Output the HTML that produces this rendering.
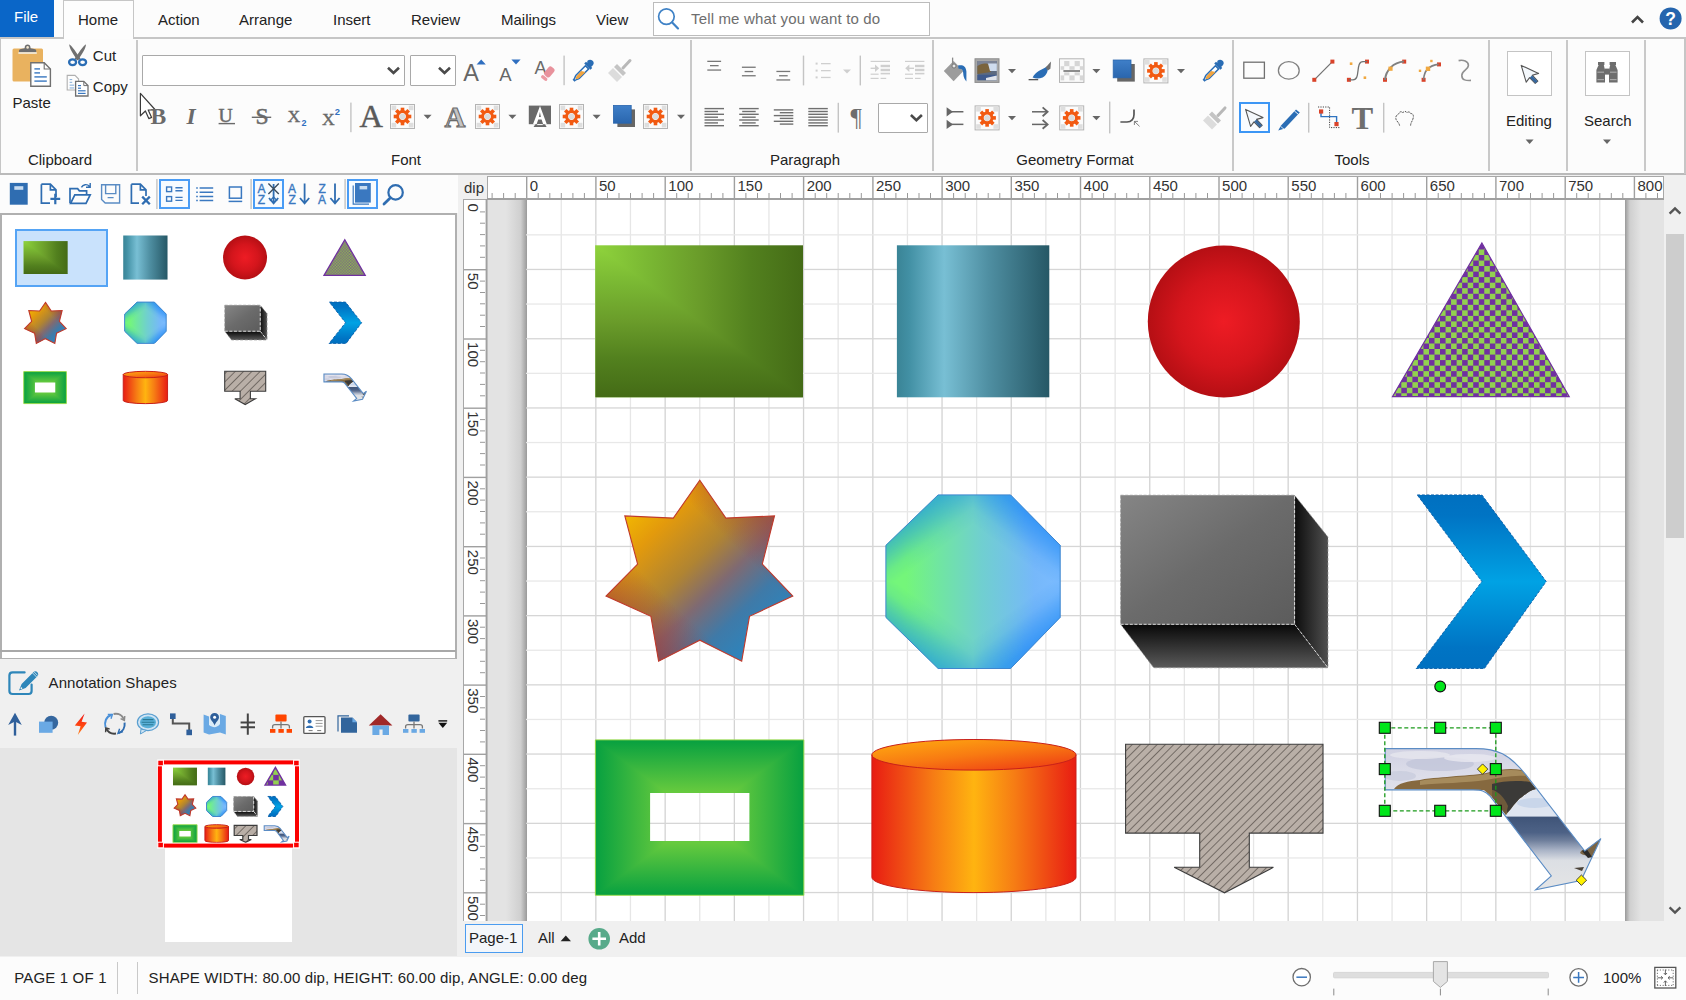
<!DOCTYPE html>
<html><head><meta charset="utf-8"><title>Diagram</title>
<style>
html,body{margin:0;padding:0}
body{width:1686px;height:1000px;overflow:hidden;position:relative;background:#f0f0f0;font-family:"Liberation Sans",sans-serif;font-size:15px;color:#222}
.abs{position:absolute}
svg{position:absolute;overflow:visible}
svg text{font-family:"Liberation Sans",sans-serif}
.t{position:absolute;white-space:nowrap;line-height:18px}
.sep{position:absolute;width:2px;background:#c9c9c9}
.gl{position:absolute;top:151px;height:18px;line-height:18px;text-align:center;white-space:nowrap}
.combo{position:absolute;background:#fff;border:1.5px solid #a9a9a9;border-radius:1px;box-sizing:border-box}
.selbox{position:absolute;border:1px solid #4a9cf0;background:#e5f1fd;box-sizing:border-box}
.ser{font-family:"Liberation Serif",serif}
</style></head>
<body>
<!-- ===== tab strip ===== -->
<div class="abs" style="left:0;top:0;width:1686px;height:38px;background:#fcfcfc"></div>
<div class="abs" style="left:0;top:37px;width:1686px;height:2px;background:#c6c6c6"></div>
<div class="abs" style="left:0;top:0;width:54px;height:37px;background:#0a66c8"></div>
<div class="t" style="left:14px;top:8px;color:#fff">File</div>
<div class="abs" style="left:63px;top:0;width:71px;height:39px;background:#fdfdfd;border:1px solid #c6c6c6;border-bottom:none;box-sizing:border-box"></div>
<div class="t" style="left:78px;top:11px">Home</div>
<div class="t" style="left:158px;top:11px">Action</div>
<div class="t" style="left:239px;top:11px">Arrange</div>
<div class="t" style="left:333px;top:11px">Insert</div>
<div class="t" style="left:411px;top:11px">Review</div>
<div class="t" style="left:501px;top:11px">Mailings</div>
<div class="t" style="left:596px;top:11px">View</div>
<div class="abs" style="left:653px;top:1.5px;width:277px;height:34px;background:#fff;border:1.6px solid #bcbcbc;box-sizing:border-box"></div>
<div class="t" style="left:691px;top:9.5px;color:#6e6e6e;letter-spacing:0.155px">Tell me what you want to do</div>
<!-- ===== ribbon body ===== -->
<div class="abs" style="left:0;top:39px;width:1686px;height:134px;background:#fcfcfc"></div>
<div class="abs" style="left:0;top:173px;width:1686px;height:2.4px;background:#bababa"></div>
<div class="abs" style="left:0;top:39px;width:1px;height:134px;background:#c6c6c6"></div>
<div class="sep" style="left:136px;top:40px;height:131px"></div>
<div class="sep" style="left:690px;top:40px;height:131px"></div>
<div class="sep" style="left:932px;top:40px;height:131px"></div>
<div class="sep" style="left:1232px;top:40px;height:131px"></div>
<div class="sep" style="left:1488px;top:40px;height:131px"></div>
<div class="sep" style="left:1566px;top:40px;height:131px"></div>
<div class="sep" style="left:1644px;top:40px;height:131px"></div>
<div class="gl" style="left:0;width:120px">Clipboard</div>
<div class="gl" style="left:346px;width:120px">Font</div>
<div class="gl" style="left:745px;width:120px">Paragraph</div>
<div class="gl" style="left:1000px;width:150px">Geometry Format</div>
<div class="gl" style="left:1292px;width:120px">Tools</div>
<div class="t" style="left:12.5px;top:94px">Paste</div>
<div class="t" style="left:92.8px;top:46.5px">Cut</div>
<div class="t" style="left:92.8px;top:77.5px">Copy</div>
<div class="t" style="left:1506px;top:112px">Editing</div>
<div class="t" style="left:1584px;top:112px">Search</div>
<div class="combo" style="left:142px;top:55px;width:263px;height:31px"></div>
<div class="combo" style="left:410px;top:55px;width:46px;height:31px"></div>
<div class="combo" style="left:878px;top:103px;width:50px;height:30px"></div>
<div class="abs" style="left:1507px;top:51px;width:45px;height:45px;border:1px solid #c4c4c4;background:#fff;box-sizing:border-box"></div>
<div class="abs" style="left:1585px;top:51px;width:45px;height:45px;border:1px solid #c4c4c4;background:#fff;box-sizing:border-box"></div>
<div class="selbox" style="left:1239px;top:102px;width:31px;height:31px;background:#fafcff;border-width:2px;border-color:#3c96f5"></div>
<div class="abs" id="ribbon-right" style="left:1684px;top:39px;width:2px;height:135px;background:#c6c6c6"></div>
<!-- ===== ribbon icons (absolute page coords) ===== -->
<svg style="left:0;top:0" width="1686" height="176" viewBox="0 0 1686 176">
<defs>
<g id="gear">
 <rect x="0.5" y="0.5" width="24" height="24" fill="#fbfbfb" stroke="#b4b4b4"/>
 <rect x="1.6" y="1.6" width="4.6" height="4.6" fill="#dedede"/><rect x="18.8" y="1.6" width="4.6" height="4.6" fill="#dedede"/><rect x="1.6" y="18.8" width="4.6" height="4.6" fill="#dedede"/><rect x="18.8" y="18.8" width="4.6" height="4.6" fill="#dedede"/>
 <g transform="translate(12.5 12.5)" fill="#f25a12">
  <g id="gt"><rect x="-1.8" y="-8.8" width="3.6" height="4.6"/></g>
  <use href="#gt" transform="rotate(45)"/><use href="#gt" transform="rotate(90)"/><use href="#gt" transform="rotate(135)"/><use href="#gt" transform="rotate(180)"/><use href="#gt" transform="rotate(225)"/><use href="#gt" transform="rotate(270)"/><use href="#gt" transform="rotate(315)"/>
  <circle r="4.9" fill="none" stroke="#f25a12" stroke-width="3"/>
  <circle r="3" fill="#dcdcdc"/>
 </g>
</g>
<path id="dd" d="M-4 -2 H4 L0 2.3 Z" fill="#666"/>
<path id="chev" d="M-5.5 -2.6 L0 2.6 L5.5 -2.6" fill="none" stroke="#4a4a4a" stroke-width="2.6"/>
<g id="dropper">
 <path d="M14.5 1.2 C16.5 -0.8 20 0.2 20.6 2.6 C21.2 4.6 19.6 6 18.2 7.2 L19.2 8.4 L17.4 10.2 L11.2 4 L13 2.2 L14.2 3.2 C14.6 2.4 14 1.8 14.5 1.2 Z" fill="#2a6db5"/>
 <path d="M12.4 6.2 L15.6 9.4 L6.2 18.8 C4.8 20 3.2 19.6 1.6 21.2 L0.6 20.2 C2.2 18.6 1.8 17 3 15.6 Z" fill="#fff" stroke="#2a6db5" stroke-width="1.5"/>
 <path d="M8.2 11.4 L12.6 12.4 L6 18.6 C4.8 19.4 3.6 19.2 2.6 19.8 C3 18.6 2.8 17.6 3.6 16.4 Z" fill="#f0a440"/>
</g>
<g id="brushg">
 <path d="M15 9 L22 1.5" stroke="#b8b8b8" stroke-width="3" stroke-linecap="round"/>
 <path d="M9 5 L18 14 L15 17 L6 8 Z" fill="#c4c4c4"/>
 <path d="M5 9 L14 18 L9 23 L0 14 Z" fill="#dcdcdc"/>
</g>
<linearGradient id="bluebox" x1="0" y1="0" x2="0" y2="1"><stop offset="0" stop-color="#3f7fc8"/><stop offset="1" stop-color="#2a66ae"/></linearGradient>
<g id="bbox"><rect x="4" y="4" width="17.6" height="17.6" fill="#666"/><rect x="0" y="0" width="17.8" height="17.8" fill="url(#bluebox)" stroke="#2a66ae" stroke-width="0.8"/></g>
</defs>

<!-- search magnifier in tell-me box -->
<circle cx="666.4" cy="16.6" r="7.8" fill="none" stroke="#3f82c6" stroke-width="1.7"/><path d="M672.2 22.4 L678 28.4" stroke="#3f82c6" stroke-width="2.2" stroke-linecap="round"/>
<!-- collapse chevron & help -->
<path d="M1632 22.5 L1637.5 17 L1643 22.5" fill="none" stroke="#444" stroke-width="2.6"/>
<circle cx="1670.6" cy="18.4" r="11" fill="#2565ae"/>
<text x="1670.6" y="24.6" font-size="17.5" font-weight="bold" fill="#fff" text-anchor="middle">?</text>

<!-- Paste -->
<rect x="12.5" y="48.5" width="30.5" height="33" rx="1.5" fill="#e9b25f"/>
<path d="M19 52.4 V50.6 C19 49.6 20 49.2 21 49 L24.6 48.2 C24.6 45.4 26 44.4 27.6 44.4 C29.2 44.4 30.6 45.4 30.6 48.2 L34.2 49 C35.2 49.2 36.2 49.6 36.2 50.6 V52.4 Z" fill="#6e6e6e"/>
<rect x="18.4" y="52.2" width="18.4" height="1.6" fill="#f6f0e4"/>
<circle cx="27.6" cy="47.4" r="1.3" fill="#f2e6d0"/>
<path d="M30.8 62.8 H44.2 L50.4 69 V86.2 H30.8 Z" fill="#fff" stroke="#707070" stroke-width="1.4"/>
<path d="M44.2 62.8 V69 H50.4" fill="none" stroke="#707070" stroke-width="1.1"/>
<g fill="#3a78c0"><rect x="34.4" y="68.2" width="5.6" height="1.4"/><rect x="34.4" y="72.2" width="5.6" height="1.4"/><rect x="34.4" y="76.2" width="12.4" height="1.4"/><rect x="34.4" y="80.4" width="12.4" height="1.4"/></g>
<!-- Cut -->
<path d="M69.2 44.2 C71.6 45.6 74 49 80.6 58.8 L77.4 60.2 C72 52 69.4 48.4 69.2 44.2 Z" fill="#707070"/>
<path d="M86 44.2 C83.6 45.6 81.2 49 74.6 58.8 L77.8 60.2 C83.2 52 85.8 48.4 86 44.2 Z" fill="#707070"/>
<ellipse cx="72.6" cy="62.2" rx="3.5" ry="2.9" fill="none" stroke="#2a6db5" stroke-width="2.3"/>
<ellipse cx="82.6" cy="62.2" rx="3.5" ry="2.9" fill="none" stroke="#2a6db5" stroke-width="2.3"/>
<!-- Copy -->
<path d="M67.2 75.4 H75 L78.6 79 V90 H67.2 Z" fill="#fdfdfd" stroke="#b0b0b0" stroke-width="1.1"/>
<g fill="#8eb4dc"><rect x="69.6" y="79" width="2.6" height="1.1"/><rect x="69.6" y="81.8" width="2.6" height="1.1"/><rect x="69.6" y="84.6" width="4.6" height="1.1"/><rect x="69.6" y="87.4" width="4.6" height="1.1"/></g>
<path d="M75.6 81.4 H83.8 L88 85.6 V96 H75.6 Z" fill="#fff" stroke="#707070" stroke-width="1.3"/>
<path d="M83.8 81.4 V85.6 H88" fill="none" stroke="#707070" stroke-width="1"/>
<g fill="#3a78c0"><rect x="78" y="85" width="3" height="1.2"/><rect x="78" y="87.6" width="3" height="1.2"/><rect x="78" y="90.2" width="7.6" height="1.2"/><rect x="78" y="92.8" width="7.6" height="1.2"/></g>
<!-- mouse cursor -->
<path d="M140.4 93.4 V115.8 L145.4 111 L148.8 118.6 L151.6 117.4 L148.2 110 H155.4 Z" fill="#fff" stroke="#3a3a3a" stroke-width="1.2" stroke-linejoin="round"/>

<!-- Font row 1 -->
<use href="#chev" x="393.5" y="70.4"/>
<use href="#chev" x="444.5" y="70.4"/>
<text x="463.2" y="81.4" font-size="23.5" fill="#666">A</text>
<path d="M476.6 64.6 L481.2 59.6 L485.8 64.6 Z" fill="#2f6fc0"/>
<text x="499.2" y="81.4" font-size="18.5" fill="#666">A</text>
<path d="M511.4 59.6 H520.6 L516 64.6 Z" fill="#2f6fc0"/>
<text x="534.4" y="74.4" font-size="18" fill="#6a6a6a">A</text>
<g transform="translate(548 73.5) rotate(40)"><rect x="-3.6" y="-7.6" width="7.2" height="11" rx="2.4" fill="#e8929c"/><rect x="-3.6" y="4.2" width="7.2" height="3.4" rx="1.6" fill="#ec9aa2"/></g>
<rect x="563.4" y="55.6" width="1.4" height="29.6" fill="#c4c4c4"/>
<use href="#dropper" x="573" y="59.6"/>
<use href="#brushg" x="608" y="59"/>
<!-- Font row 2 -->
<g fill="#6a6a6a" style="font-family:'Liberation Serif',serif">
<text class="ser" x="150.6" y="124.2" font-size="23.6" font-weight="bold">B</text>
<text class="ser" x="186.4" y="124.2" font-size="23.6" font-weight="bold" font-style="italic">I</text>
<text class="ser" x="218.6" y="121.6" font-size="19.6" stroke="#6a6a6a" stroke-width="0.5">U</text>
<rect x="218.6" y="122.9" width="16.4" height="1.4"/>
<text class="ser" x="255.6" y="124.2" font-size="23.6" stroke="#6a6a6a" stroke-width="0.5">S</text>
<rect x="251.8" y="116.6" width="19.4" height="1.4"/>
<text class="ser" x="287.6" y="121.6" font-size="17.6" stroke="#6a6a6a" stroke-width="0.4">X</text>
<text class="ser" x="322" y="124.6" font-size="17.6" stroke="#6a6a6a" stroke-width="0.4">X</text>
</g>
<text x="301.4" y="126.2" font-size="9" font-weight="bold" fill="#2f6fc0">2</text>
<text x="334.8" y="114.6" font-size="9.4" font-weight="bold" fill="#2f6fc0">2</text>
<rect x="350.2" y="102.6" width="1.4" height="29.6" fill="#c4c4c4"/>
<text x="359.4" y="127.2" font-size="32.4" fill="#5a5a5a" stroke="#5a5a5a" stroke-width="0.5" style="font-family:'Liberation Serif',serif">A</text>
<use href="#gear" x="390" y="104"/>
<use href="#dd" x="427.6" y="116.8"/>
<text x="444.4" y="126.8" font-size="29" font-weight="bold" fill="#c4c4c4" stroke="#6a6a6a" stroke-width="1.1" style="font-family:'Liberation Serif',serif">A</text>
<use href="#gear" x="475" y="104"/>
<use href="#dd" x="512.4" y="116.8"/>
<rect x="528.8" y="105.6" width="22.2" height="18.6" fill="#696969"/>
<path d="M535.4 124 H545 L546.6 127 H533.6 Z" fill="#696969"/>
<path d="M540 106 L546.8 124.2 H543.2 L541.6 119.6 H538.2 L536.6 124.2 H533 Z M539.9 112 L538.9 117 H540.9 Z" fill="#fff" fill-rule="evenodd"/>
<path d="M537.2 124.6 H542.8" stroke="#fff" stroke-width="1" />
<use href="#gear" x="559" y="104"/>
<use href="#dd" x="596.6" y="116.8"/>
<use href="#bbox" x="613.4" y="105.4"/>
<use href="#gear" x="643" y="104"/>
<use href="#dd" x="681" y="116.8"/>
<!-- Paragraph row 1 -->
<g fill="#777">
<rect x="707.3" y="60.7" width="13.8" height="1.3"/><rect x="710" y="65" width="8.6" height="1.3"/><rect x="707.3" y="69.4" width="13.8" height="1.3"/>
<rect x="741.9" y="66.6" width="13.8" height="1.3"/><rect x="744.6" y="70.9" width="8.6" height="1.3"/><rect x="741.9" y="75.1" width="13.8" height="1.3"/>
<rect x="776.4" y="70.8" width="13.8" height="1.3"/><rect x="779.1" y="75.1" width="8.6" height="1.3"/><rect x="776.4" y="79.3" width="13.8" height="1.3"/>
</g>
<rect x="802.8" y="55.6" width="1.4" height="29.8" fill="#c4c4c4"/>
<g fill="#cfcfcf">
<rect x="815.6" y="62.6" width="2" height="2"/><rect x="815.6" y="69.6" width="2" height="2"/><rect x="815.6" y="76.4" width="2" height="2"/>
<rect x="821" y="63" width="9.6" height="1.3"/><rect x="821" y="70" width="9.6" height="1.3"/><rect x="821" y="76.8" width="9.6" height="1.3"/>
<path d="M843 69.4 H851 L847 73.6 Z"/>
</g>
<rect x="859.6" y="55.6" width="1.4" height="29.8" fill="#c4c4c4"/>
<g fill="#cfcfcf">
<rect x="870.6" y="60.8" width="19.4" height="1.2"/><rect x="870.6" y="73.6" width="8" height="1.2"/><rect x="870.6" y="77.8" width="8" height="1.2"/><rect x="880.6" y="77.8" width="5.6" height="1.2"/>
<rect x="880.6" y="64.8" width="9.4" height="2.4"/><rect x="880.6" y="68.8" width="9.4" height="2.4"/><rect x="880.6" y="72.8" width="9.4" height="1.6"/>
<rect x="870.6" y="67.6" width="7" height="1.4"/><path d="M875 64.6 L879.2 68.3 L875 72 Z"/>
<rect x="905" y="60.8" width="19.4" height="1.2"/><rect x="905" y="73.6" width="8" height="1.2"/><rect x="905" y="77.8" width="8" height="1.2"/><rect x="915" y="77.8" width="5.6" height="1.2"/>
<rect x="915" y="64.8" width="9.4" height="2.4"/><rect x="915" y="68.8" width="9.4" height="2.4"/><rect x="915" y="72.8" width="9.4" height="1.6"/>
<rect x="907" y="67.6" width="7" height="1.4"/><path d="M909.4 64.6 L905.2 68.3 L909.4 72 Z"/>
</g>
<!-- Paragraph row 2 -->
<g fill="#707070">
<rect x="704.5" y="107.9" width="19.5" height="1.4"/><rect x="704.5" y="110.8" width="13.5" height="1.4"/><rect x="704.5" y="113.6" width="19.5" height="1.4"/><rect x="704.5" y="116.5" width="13.5" height="1.4"/><rect x="704.5" y="119.3" width="19.5" height="1.4"/><rect x="704.5" y="122.2" width="13.5" height="1.4"/><rect x="704.5" y="125" width="19.5" height="1.4"/>
<rect x="739.2" y="107.9" width="19.5" height="1.4"/><rect x="742.2" y="110.8" width="13.5" height="1.4"/><rect x="739.2" y="113.6" width="19.5" height="1.4"/><rect x="742.2" y="116.5" width="13.5" height="1.4"/><rect x="739.2" y="119.3" width="19.5" height="1.4"/><rect x="742.2" y="122.2" width="13.5" height="1.4"/><rect x="739.2" y="125" width="19.5" height="1.4"/>
<rect x="773.8" y="109.2" width="19.5" height="1.4"/><rect x="779.8" y="112" width="13.5" height="1.4"/><rect x="773.8" y="114.9" width="19.5" height="1.4"/><rect x="779.8" y="117.7" width="13.5" height="1.4"/><rect x="773.8" y="120.6" width="19.5" height="1.4"/><rect x="779.8" y="123.4" width="13.5" height="1.4"/>
<rect x="808.3" y="107.9" width="19.5" height="1.4"/><rect x="808.3" y="110.8" width="19.5" height="1.4"/><rect x="808.3" y="113.6" width="19.5" height="1.4"/><rect x="808.3" y="116.5" width="19.5" height="1.4"/><rect x="808.3" y="119.3" width="19.5" height="1.4"/><rect x="808.3" y="122.2" width="19.5" height="1.4"/><rect x="808.3" y="125" width="19.5" height="1.4"/>
</g>
<rect x="837.6" y="102.8" width="1.4" height="29.8" fill="#c4c4c4"/>
<text x="850.6" y="126" font-size="25" fill="#6e6e6e" style="font-family:'Liberation Serif',serif">¶</text>
<use href="#chev" x="916.4" y="117.6"/>

<!-- Geometry row 1 -->
<path d="M953.6 61 L963.4 71 L953.6 81.2 L943.8 71 Z" fill="#9c9c9c"/>
<path d="M952.6 57.6 V64.2" stroke="#8a8a8a" stroke-width="1.3"/><circle cx="954" cy="66" r="2" fill="#e8e8e8" stroke="#666" stroke-width="0.8"/>
<path d="M958 65.6 C962.5 64.5 966 66 966.4 71.5 V81.5 C965 79.5 963.5 78 963.2 73 C963 69.5 961.5 68.5 958.6 68.8 Z" fill="#2a6db5"/>
<rect x="975" y="58.8" width="24" height="23.6" fill="#a8a8a8" stroke="#8c8c8c" stroke-width="1"/>
<rect x="977.4" y="61" width="19.4" height="19.2" fill="#5c6a80"/>
<rect x="977.4" y="61" width="19.4" height="6" fill="#7c8496"/>
<path d="M977.4 66 C981 63 987 62.5 990 65 L991 72 L977.4 74 Z" fill="#7a643e"/>
<path d="M988 63.5 H996.8 V71 H990 Z" fill="#cfdcee"/>
<rect x="977.4" y="74.8" width="19.4" height="5.4" fill="#3f5a8c"/>
<path d="M986 78 L996.8 75.5 V80.2 H986 Z" fill="#dfe3ea"/>
<use href="#dd" x="1012" y="71"/>
<path d="M1032.6 77.6 C1036 71 1042 70 1046.8 66.6 C1049 69.8 1047 75.4 1042.6 77.4 C1039.4 78.8 1035.6 78.8 1032.6 77.6 Z" fill="#2a6db5"/>
<path d="M1045.6 67.6 L1051 61.4 L1050.4 68.8 L1047.8 70.6 Z" fill="#6e6e6e"/>
<rect x="1028.6" y="79" width="9.6" height="1.3" fill="#555"/>
<rect x="1059.5" y="58.8" width="24.4" height="23.6" fill="#fafafa" stroke="#b4b4b4"/>
<g fill="#d6d6d6"><rect x="1064.2" y="61" width="5.2" height="5.2"/><rect x="1074.6" y="61" width="5.2" height="5.2"/><rect x="1069.4" y="66.2" width="5.2" height="3.6"/><rect x="1064.2" y="72.4" width="5.2" height="3"/><rect x="1074.6" y="72.4" width="5.2" height="3"/><rect x="1069.4" y="75.4" width="5.2" height="5"/><rect x="1060.6" y="75.4" width="3.6" height="5"/><rect x="1079.8" y="75.4" width="3.4" height="5"/><rect x="1060.6" y="66.2" width="3.6" height="3.6"/><rect x="1079.8" y="66.2" width="3.4" height="3.6"/></g>
<rect x="1063.4" y="70.4" width="16.6" height="1.2" fill="#444"/>
<use href="#dd" x="1096.4" y="71"/>
<use href="#bbox" x="1113.2" y="60"/>
<use href="#gear" x="1143.4" y="58.4"/>
<use href="#dd" x="1181" y="71"/>
<use href="#dropper" x="1203" y="59.6"/>
<!-- Geometry row 2 -->
<g fill="#666"><rect x="948" y="111" width="15.4" height="1.5"/><rect x="948" y="123.6" width="15.4" height="1.5"/><path d="M946.6 107.2 L953 111.8 L946.6 116.4 Z"/><path d="M946.6 119.8 L953 124.4 L946.6 129 Z"/></g>
<use href="#gear" x="974.6" y="105.4"/>
<use href="#dd" x="1012" y="118"/>
<g fill="none" stroke="#666" stroke-width="1.5"><path d="M1032 111.8 H1047"/><path d="M1032 124.4 H1047"/><path d="M1042.6 107.4 L1047.6 111.8 L1042.6 116.2" stroke-width="1.8"/><path d="M1042.6 120 L1047.6 124.4 L1042.6 128.8" stroke-width="1.8"/></g>
<use href="#gear" x="1059.2" y="105.4"/>
<use href="#dd" x="1096.4" y="118"/>
<rect x="1109" y="101.6" width="1.4" height="31.8" fill="#c4c4c4"/>
<path d="M1120.4 122 H1127 C1131.4 122 1134 119 1134 114.6 V109.6" fill="none" stroke="#555" stroke-width="1.7"/>
<path d="M1134.4 121.4 L1139.6 126.4 M1134.4 121.4 V125 M1134.4 121.4 H1138" stroke="#666" stroke-width="0.8" fill="none"/>
<use href="#brushg" x="1203" y="106.4"/>

<!-- Tools row 1 -->
<rect x="1243.8" y="62.2" width="20.6" height="16" fill="none" stroke="#707070" stroke-width="1.3"/>
<ellipse cx="1288.8" cy="70.4" rx="10.4" ry="8.8" fill="none" stroke="#808080" stroke-width="1.3"/>
<path d="M1314.3 79.8 L1332.4 61.6" stroke="#707070" stroke-width="1.2"/>
<g fill="#d9432a"><rect x="1312.3" y="77.8" width="4" height="4"/><rect x="1330.4" y="59.6" width="4" height="4"/>
<rect x="1346.9" y="77.8" width="4" height="4"/><rect x="1365" y="59.6" width="4" height="4"/>
<rect x="1383" y="77.8" width="4" height="4"/><rect x="1402.2" y="59.6" width="4" height="4"/>
<rect x="1421.6" y="77.8" width="4" height="4"/><rect x="1437" y="62.4" width="4" height="4"/></g>
<path d="M1349 79.8 H1353 C1361 79.8 1355 61.6 1363 61.6 H1367" fill="none" stroke="#707070" stroke-width="1.3"/>
<g fill="#f0a840"><rect x="1349.8" y="62.4" width="2.6" height="2.6"/><rect x="1363.6" y="76.4" width="2.6" height="2.6"/></g>
<path d="M1385 79.8 C1386 70 1393 62.6 1404 61.6" fill="none" stroke="#808080" stroke-width="2"/>
<rect x="1388.4" y="66.6" width="4.2" height="4.2" fill="#f0a840"/>
<path d="M1423.6 79.8 C1424 71 1429 65.4 1438.6 64.4" fill="none" stroke="#808080" stroke-width="1.6"/>
<g fill="#f0a840"><rect x="1425.8" y="66.6" width="4.4" height="4.4"/><rect x="1418.8" y="69.6" width="2.4" height="2.4"/><rect x="1430.2" y="59.8" width="2.4" height="2.4"/></g>
<path d="M1458.6 60.6 C1463 59.6 1468.6 61 1468.4 65.6 C1468.2 70 1461.6 70.6 1461.8 75.6 C1462 80.4 1466 80.6 1471 80.4" fill="none" stroke="#909090" stroke-width="1.6"/>
<!-- Tools row 2 -->
<g id="curs"><path d="M1245.6 109.4 L1263 117.6 L1256.6 119.4 L1262.2 125.4 L1259.6 127.6 L1254 121.8 L1250.6 126.4 Z" fill="#f4f8fc" stroke="#555" stroke-width="1.1" stroke-linejoin="round"/><path d="M1256.4 119.6 L1262 125.4 L1259.8 127.4 L1254.2 121.6 Z" fill="#35679f"/></g>
<path d="M1281 125.6 L1296 109.4 L1299.8 112.6 L1284.8 128.6 L1278.2 130.4 Z" fill="#2a6db5"/>
<path d="M1294.4 111 L1298.4 114.4" stroke="#fff" stroke-width="0.9"/>
<path d="M1280.6 126.4 L1284 129.2" stroke="#fff" stroke-width="0.8"/>
<rect x="1308" y="102.8" width="1.4" height="29.8" fill="#c4c4c4"/>
<path d="M1318 107 H1329.6 V127.6 H1340" fill="none" stroke="#444" stroke-width="1" stroke-dasharray="1.2 1.2"/>
<path d="M1321 112 V116.6 H1336.6 V124" fill="none" stroke="#2f74c0" stroke-width="1.4"/>
<g fill="#d9432a"><rect x="1319" y="109.4" width="4.2" height="4.2"/><rect x="1334.4" y="122" width="4.2" height="4.2"/></g>
<text x="1351.4" y="128.6" font-size="32.5" font-weight="bold" fill="#6e6e6e" style="font-family:'Liberation Serif',serif">T</text>
<rect x="1383" y="102.8" width="1.4" height="29.8" fill="#c4c4c4"/>
<path d="M1399.6 125.6 C1399 122 1395.6 121 1395.8 117.6 C1396 114.6 1398.4 114.8 1398.8 113.6 C1399.2 111.4 1402 111.2 1402.8 112.8 C1403.6 111 1406.2 111 1407 112.8 C1408 111.4 1410.4 111.8 1410.8 113.6 C1413 113.4 1413.8 115.4 1413.2 118 C1412.6 121 1410.6 122.6 1410.6 125.6" fill="none" stroke="#555" stroke-width="1" stroke-dasharray="2.2 0.9"/>
<!-- Editing / Search -->
<g transform="translate(268.6 -48.2)"><path d="M1252.6 113.6 L1270 121.6 L1263.6 123.4 L1269.2 129.4 L1266.6 131.6 L1261 125.8 L1257.6 130.4 Z" fill="#f4f8fc" stroke="#555" stroke-width="1.1" stroke-linejoin="round"/><path d="M1263.4 123.6 L1269 129.4 L1266.8 131.4 L1261.2 125.6 Z" fill="#35679f"/></g>
<use href="#dd" x="1529.6" y="141.6"/>
<use href="#dd" x="1607" y="141.6"/>
<g fill="#6e6e6e">
<rect x="1598" y="62" width="6.4" height="3"/><rect x="1609.6" y="62" width="6.4" height="3"/>
<path d="M1598.6 65 H1603.8 L1605 70 V82.4 H1596.4 V70 Z"/><path d="M1610.2 65 H1615.4 L1617.6 70 V82.4 H1609 V70 Z"/>
<rect x="1604.6" y="68.6" width="4.8" height="6"/>
</g>
<g fill="#a8a8a8"><rect x="1597.4" y="71.6" width="6.6" height="1.2"/><rect x="1610" y="71.6" width="6.6" height="1.2"/><rect x="1597.4" y="79" width="6.6" height="1.2"/><rect x="1610" y="79" width="6.6" height="1.2"/></g>
</svg>
<!-- ===== left panel ===== -->
<div class="abs" style="left:0;top:175px;width:458px;height:38px;background:#fcfcfc"></div>
<div class="abs" style="left:0;top:213px;width:457px;height:446.4px;background:#fff;border:2px solid #b0b0b0;border-bottom-width:1.4px;box-sizing:border-box"></div>
<div class="abs" style="left:0;top:650px;width:456px;height:2.2px;background:#a8a8a8"></div>
<div class="abs" style="left:0;top:659px;width:458px;height:90px;background:#f0f0f0"></div>
<div class="t" style="left:48.6px;top:674px;letter-spacing:0.08px">Annotation Shapes</div>
<div class="abs" style="left:0;top:748px;width:457px;height:208px;background:#e5e5e5"></div>
<div class="abs" style="left:165px;top:762px;width:127px;height:180px;background:#fff"></div>
<div class="abs" style="left:159px;top:761px;width:139px;height:86px;background:#fff"></div>
<!-- ===== left toolbar icons ===== -->
<div class="selbox" style="left:159px;top:179px;width:31px;height:30px;background:#f7fbff;border-width:2px;border-color:#4a9cf5"></div>
<div class="selbox" style="left:253px;top:179px;width:31px;height:30px;background:#f7fbff;border-width:2px;border-color:#4a9cf5"></div>
<div class="selbox" style="left:347px;top:179px;width:31px;height:30px;background:#f7fbff;border-width:2px;border-color:#4a9cf5"></div>
<div class="selbox" style="left:15px;top:229px;width:93px;height:58px;background:#c9e2fc;border-color:#55a4f5;border-width:2px"></div>
<svg style="left:0;top:0" width="460" height="760" viewBox="0 0 460 760">
<g fill="none" stroke="#2f6db1" stroke-width="1.7">
<!-- book -->
<rect x="9.8" y="182.9" width="17.9" height="21.8" fill="#2f6db1" stroke="none"/>
<rect x="14.3" y="186.2" width="9" height="3.6" fill="#c8dcf0" stroke="none"/>
<!-- new doc -->
<path d="M41.4 184.2 H50.4 L56 189.8 V197 M50 203.2 H41.4 V184.2 M50.4 184.2 V189.8 H56"/>
<path d="M50.4 198.8 H60.2 M55.3 193.8 V204.2" stroke-width="2.2"/>
<!-- open folder -->
<path d="M70 203 V188.6 H77.6 L79.4 190.8 H86.6 V194.6"/>
<path d="M70.6 203.4 L74.8 194.8 H90.2 L86 203.4 Z"/>
<path d="M81.4 187.4 C83 184.4 87 183.6 89.4 186.4 M90.2 183 V187.2 H86" stroke-width="1.4"/>
<!-- save -->
<path d="M101.6 184.8 H119.6 V203 H105.2 L101.6 199.4 Z" stroke="#5a8cc4" stroke-width="1.4"/>
<path d="M105.6 184.8 V193.6 H115.8 V184.8 M107.6 197.6 H113.6" stroke="#5a8cc4" stroke-width="1.4"/>
<!-- doc x -->
<path d="M131.4 184.2 H140.4 L146 189.8 V196 M139 203.2 H131.4 V184.2 M140.4 184.2 V189.8 H146"/>
<path d="M142.2 196.6 L149.8 204.2 M149.8 196.6 L142.2 204.2" stroke-width="2.3"/>
</g>
<rect x="156.2" y="179" width="1.4" height="30" fill="#c4c4c4"/>
<g fill="none" stroke="#3a78c0" stroke-width="1.4">
<rect x="166.6" y="187" width="5" height="4.6"/><rect x="166.6" y="196.6" width="5" height="4.6"/>
<path d="M175.4 187.8 H182.6 M175.4 190.8 H182.6 M175.4 197.4 H182.6 M175.4 200.4 H182.6"/>
<path d="M199.6 188 H213.2 M199.6 192.2 H213.2 M199.6 196.4 H213.2 M199.6 200.6 H213.2" stroke-width="1.5"/>
<path d="M196.2 188 H197.8 M196.2 192.2 H197.8 M196.2 196.4 H197.8 M196.2 200.6 H197.8" stroke-width="1.5"/>
<rect x="229.4" y="187" width="12" height="11.2" stroke-width="1.5"/>
<path d="M228.6 201.4 H242.2" stroke-width="1.5"/>
</g>
<rect x="250.4" y="179" width="1.4" height="30" fill="#c4c4c4"/>
<g font-size="12" fill="#3a78c0" stroke="#3a78c0" stroke-width="0.35">
<text x="257.4" y="192.6">A</text><text x="257.8" y="204.4">Z</text>
<text x="288" y="192.6">A</text><text x="288.4" y="204.4">Z</text>
<text x="318.4" y="192.6">Z</text><text x="318" y="204.4">A</text>
</g>
<g stroke="#2f6db1" fill="none" stroke-width="1.8">
<path d="M273.6 184 V203 M269 198 L273.6 203.4 L278.2 198" />
<path d="M273.6 197 L270 200.8 M273.6 197 L277.2 200.8" stroke-width="1.2"/>
<path d="M304.6 183.6 V203 M300 198 L304.6 203.4 L309.2 198"/>
<path d="M335 183.6 V203 M330.4 198 L335 203.4 L339.6 198"/>
</g>
<path d="M268.4 183.6 L278.8 194 M278.8 183.6 L268.4 194" stroke="#3c4c5c" stroke-width="1.4"/>
<rect x="344.4" y="179" width="1.4" height="30" fill="#c4c4c4"/>
<path d="M353.2 185.4 V204.2 H369" fill="none" stroke="#3a78c0" stroke-width="1.2"/>
<rect x="355" y="183" width="15.8" height="19.6" fill="#3a78c0"/>
<rect x="359.6" y="186" width="7.6" height="3.4" fill="#c8dcf0"/>
<circle cx="395.6" cy="192.4" r="7.2" fill="none" stroke="#2f6db1" stroke-width="2.2"/>
<path d="M390.4 197.8 L384 204" stroke="#2f6db1" stroke-width="2.8" stroke-linecap="round"/>

<!-- Annotation header icon -->
<path d="M31.6 684.6 V691 C31.6 693 30.4 694 28.6 694 H12.6 C10.6 694 9.4 693 9.4 691 V675.6 C9.4 673.6 10.6 672.4 12.6 672.4 H24.6" fill="none" stroke="#2e86b9" stroke-width="2.2" stroke-linecap="round"/>
<path d="M21.6 684 L33.6 672 C34.6 671 36.4 671.2 37.4 672.2 C38.4 673.2 38.6 675 37.6 676 L25.6 688 L19 690.6 Z" fill="#2e86b9"/>
<path d="M32.6 673 L36.6 677 M34 671.8 L37.8 675.6" stroke="#e8f2f8" stroke-width="0.8"/>
<circle cx="21.4" cy="688.2" r="0.9" fill="#f0f0f0"/>

<!-- annotation icons row -->
<path d="M15 735.6 V719" stroke="#2f5f9a" stroke-width="2.4"/><path d="M15 712.8 L21.8 725 L15 721.6 L8.2 725 Z" fill="#2f5f9a"/>
<circle cx="51.2" cy="722.8" r="7" fill="#35679f"/>
<rect x="39" y="721.6" width="13.6" height="11.2" fill="#6aa9e4"/>
<linearGradient id="bolt" x1="0" y1="0" x2="0" y2="1"><stop offset="0" stop-color="#f01818"/><stop offset="0.6" stop-color="#ff4a10"/><stop offset="1" stop-color="#ff8a20"/></linearGradient>
<path d="M84.6 713.6 L74.8 725.4 L80.6 726.2 L77.8 735 L87 722.6 L81.6 721.8 Z" fill="url(#bolt)"/>
<g fill="none" stroke-width="2">
<path d="M105.6 727.6 C104 722 106 716.6 111.6 714.8" stroke="#4a90d8"/>
<path d="M107.8 714.4 L112.4 714.4 L111 718.8" stroke="#4a90d8" stroke-width="1.4"/>
<path d="M113.6 714 C118.6 713 122.6 715.6 124 719.6" stroke="#8a8a8a"/>
<path d="M120.6 718.6 L124.4 720.4 L124.8 716" stroke="#8a8a8a" stroke-width="1.4"/>
<path d="M124.6 722.6 C125.2 727.6 122.6 731.6 118.6 733" stroke="#2f6db1"/>
<path d="M123 731.6 L118 733.4 L119.6 728.8" stroke="#2f6db1" stroke-width="1.4"/>
<path d="M116 733.6 C111.6 734.2 107.8 732 106 728.4" stroke="#444"/>
<path d="M109.6 729 L105.8 728 L105.6 732.2" stroke="#444" stroke-width="1.4"/>
</g>
<ellipse cx="148" cy="722.2" rx="10.6" ry="8.4" fill="#cfe4f4" stroke="#5a9fd0" stroke-width="1.2"/>
<path d="M141 729 L140.4 734 L146.6 730.4 Z" fill="#cfe4f4" stroke="#5a9fd0" stroke-width="1"/>
<ellipse cx="148" cy="722.2" rx="8" ry="6" fill="#5ab0d8"/>
<path d="M142.6 719.6 H153.4 M141.6 722.2 H154.4 M142.6 724.8 H153.4" stroke="#2a7894" stroke-width="1.1"/>
<path d="M172.8 719 V723.4 H189.2 V730" fill="none" stroke="#555" stroke-width="2"/>
<rect x="170" y="713.4" width="5.6" height="5.6" fill="#2f5f9a"/><rect x="186.4" y="729.6" width="5.6" height="5.6" fill="#2f5f9a"/>
<path d="M203.6 714.4 L209 716.4 V734.6 L203.6 732.6 Z" fill="#6aa9e4"/>
<path d="M209 716.4 L220 714 V732.4 L209 734.6 Z" fill="#dcecf8"/>
<path d="M220 714 L225.8 716 V734.4 L220 732.4 Z" fill="#6aa9e4"/>
<path d="M209 725 C213 728 217 728 220 724 V732.4 L209 734.6 Z" fill="#6aa9e4"/>
<path d="M214.6 713 C217.2 713 219 715 219 717.2 C219 720 215.6 722 214.6 725.4 C213.6 722 210.2 720 210.2 717.2 C210.2 715 212 713 214.6 713 Z" fill="#2f5f9a"/>
<circle cx="214.6" cy="717.2" r="1.5" fill="#fff"/>
<path d="M247.8 713.4 V734.8 M240.6 722.4 H255 M240.6 727.2 H255" stroke="#444" stroke-width="2" fill="none"/>
<g fill="#ff4500"><rect x="275.4" y="714.4" width="11.2" height="7.2" rx="1"/><rect x="270" y="729" width="5.4" height="3.8"/><rect x="278.4" y="729" width="5.4" height="3.8"/><rect x="286.6" y="729" width="5.4" height="3.8"/></g>
<path d="M281 721.6 V728.6 M272.6 728.6 V726.6 C272.6 725 273.6 724.6 275 724.6 H287 C288.4 724.6 289.4 725 289.4 726.6 V728.6" fill="none" stroke="#777" stroke-width="1.3"/>
<rect x="303.8" y="716.6" width="21.2" height="16.8" rx="1" fill="#fff" stroke="#555" stroke-width="1.3"/>
<circle cx="309.6" cy="721.4" r="2" fill="#2f6db1"/><path d="M305.8 728 C306 724.6 313.2 724.6 313.4 728 Z" fill="#2f6db1"/>
<path d="M315.6 720.6 H322.6 M315.6 723.4 H322.6 M315.6 726.2 H322.6" stroke="#999" stroke-width="1"/>
<path d="M308.6 730.6 H312.6 M317.2 730.6 H321.2" stroke="#777" stroke-width="1"/>
<path d="M338 731.6 V715.8 H349" fill="none" stroke="#32659c" stroke-width="1.2"/>
<path d="M341 717.6 H352.4 L357 722.2 V732.8 H341 Z" fill="#32659c"/>
<path d="M352.4 717.6 L357 722.2 H352.4 Z" fill="#6aa9e4"/>
<path d="M380.6 714.2 L392.4 725.6 H368.8 Z" fill="#a02828"/>
<path d="M372.4 725.6 H389 V735 H382.6 V729.6 H379.4 V735 H372.4 Z" fill="#6aa9e4"/>
<g fill="#6aa9e4"><rect x="403" y="729" width="5.4" height="3.8"/><rect x="411.4" y="729" width="5.4" height="3.8"/><rect x="419.6" y="729" width="5.4" height="3.8"/></g>
<rect x="408.4" y="714.4" width="11.2" height="7.2" rx="1" fill="#32659c"/>
<path d="M414 721.6 V728.6 M405.6 728.6 V726.6 C405.6 725 406.6 724.6 408 724.6 H420 C421.4 724.6 422.4 725 422.4 726.6 V728.6" fill="none" stroke="#777" stroke-width="1.3"/>
<rect x="438.4" y="720.2" width="8.8" height="1.4" fill="#111"/><path d="M438.4 722.8 H447.2 L442.8 728 Z" fill="#111"/>
</svg>
<!-- rulers -->
<svg style="position:absolute;left:487px;top:176px" width="1177" height="24" viewBox="487 176 1177 24">
<rect x="487.5" y="176.5" width="1176" height="23" fill="#fff" stroke="#a8a8a8"/>
<rect x="487" y="198" width="1177" height="2" fill="#a0a0a0"/>
<rect x="491.6" y="193" width="1" height="5" fill="#999"/>
<rect x="503.1" y="193" width="1" height="5" fill="#999"/>
<rect x="514.7" y="193" width="1" height="5" fill="#999"/>
<rect x="526.0" y="177" width="1.4" height="22" fill="#a0a0a0"/>
<rect x="537.7" y="193" width="1" height="5" fill="#999"/>
<rect x="549.3" y="193" width="1" height="5" fill="#999"/>
<rect x="560.8" y="193" width="1" height="5" fill="#999"/>
<rect x="572.4" y="193" width="1" height="5" fill="#999"/>
<rect x="583.9" y="193" width="1" height="5" fill="#999"/>
<rect x="595.2" y="177" width="1.4" height="22" fill="#a0a0a0"/>
<rect x="607.0" y="193" width="1" height="5" fill="#999"/>
<rect x="618.5" y="193" width="1" height="5" fill="#999"/>
<rect x="630.0" y="193" width="1" height="5" fill="#999"/>
<rect x="641.6" y="193" width="1" height="5" fill="#999"/>
<rect x="653.1" y="193" width="1" height="5" fill="#999"/>
<rect x="664.5" y="177" width="1.4" height="22" fill="#a0a0a0"/>
<rect x="676.2" y="193" width="1" height="5" fill="#999"/>
<rect x="687.7" y="193" width="1" height="5" fill="#999"/>
<rect x="699.3" y="193" width="1" height="5" fill="#999"/>
<rect x="710.8" y="193" width="1" height="5" fill="#999"/>
<rect x="722.4" y="193" width="1" height="5" fill="#999"/>
<rect x="733.7" y="177" width="1.4" height="22" fill="#a0a0a0"/>
<rect x="745.4" y="193" width="1" height="5" fill="#999"/>
<rect x="757.0" y="193" width="1" height="5" fill="#999"/>
<rect x="768.5" y="193" width="1" height="5" fill="#999"/>
<rect x="780.0" y="193" width="1" height="5" fill="#999"/>
<rect x="791.6" y="193" width="1" height="5" fill="#999"/>
<rect x="802.9" y="177" width="1.4" height="22" fill="#a0a0a0"/>
<rect x="814.7" y="193" width="1" height="5" fill="#999"/>
<rect x="826.2" y="193" width="1" height="5" fill="#999"/>
<rect x="837.7" y="193" width="1" height="5" fill="#999"/>
<rect x="849.3" y="193" width="1" height="5" fill="#999"/>
<rect x="860.8" y="193" width="1" height="5" fill="#999"/>
<rect x="872.2" y="177" width="1.4" height="22" fill="#a0a0a0"/>
<rect x="883.9" y="193" width="1" height="5" fill="#999"/>
<rect x="895.4" y="193" width="1" height="5" fill="#999"/>
<rect x="907.0" y="193" width="1" height="5" fill="#999"/>
<rect x="918.5" y="193" width="1" height="5" fill="#999"/>
<rect x="930.0" y="193" width="1" height="5" fill="#999"/>
<rect x="941.4" y="177" width="1.4" height="22" fill="#a0a0a0"/>
<rect x="953.1" y="193" width="1" height="5" fill="#999"/>
<rect x="964.7" y="193" width="1" height="5" fill="#999"/>
<rect x="976.2" y="193" width="1" height="5" fill="#999"/>
<rect x="987.7" y="193" width="1" height="5" fill="#999"/>
<rect x="999.3" y="193" width="1" height="5" fill="#999"/>
<rect x="1010.6" y="177" width="1.4" height="22" fill="#a0a0a0"/>
<rect x="1022.3" y="193" width="1" height="5" fill="#999"/>
<rect x="1033.9" y="193" width="1" height="5" fill="#999"/>
<rect x="1045.4" y="193" width="1" height="5" fill="#999"/>
<rect x="1057.0" y="193" width="1" height="5" fill="#999"/>
<rect x="1068.5" y="193" width="1" height="5" fill="#999"/>
<rect x="1079.8" y="177" width="1.4" height="22" fill="#a0a0a0"/>
<rect x="1091.6" y="193" width="1" height="5" fill="#999"/>
<rect x="1103.1" y="193" width="1" height="5" fill="#999"/>
<rect x="1114.7" y="193" width="1" height="5" fill="#999"/>
<rect x="1126.2" y="193" width="1" height="5" fill="#999"/>
<rect x="1137.7" y="193" width="1" height="5" fill="#999"/>
<rect x="1149.1" y="177" width="1.4" height="22" fill="#a0a0a0"/>
<rect x="1160.8" y="193" width="1" height="5" fill="#999"/>
<rect x="1172.3" y="193" width="1" height="5" fill="#999"/>
<rect x="1183.9" y="193" width="1" height="5" fill="#999"/>
<rect x="1195.4" y="193" width="1" height="5" fill="#999"/>
<rect x="1207.0" y="193" width="1" height="5" fill="#999"/>
<rect x="1218.3" y="177" width="1.4" height="22" fill="#a0a0a0"/>
<rect x="1230.0" y="193" width="1" height="5" fill="#999"/>
<rect x="1241.6" y="193" width="1" height="5" fill="#999"/>
<rect x="1253.1" y="193" width="1" height="5" fill="#999"/>
<rect x="1264.7" y="193" width="1" height="5" fill="#999"/>
<rect x="1276.2" y="193" width="1" height="5" fill="#999"/>
<rect x="1287.5" y="177" width="1.4" height="22" fill="#a0a0a0"/>
<rect x="1299.3" y="193" width="1" height="5" fill="#999"/>
<rect x="1310.8" y="193" width="1" height="5" fill="#999"/>
<rect x="1322.3" y="193" width="1" height="5" fill="#999"/>
<rect x="1333.9" y="193" width="1" height="5" fill="#999"/>
<rect x="1345.4" y="193" width="1" height="5" fill="#999"/>
<rect x="1356.8" y="177" width="1.4" height="22" fill="#a0a0a0"/>
<rect x="1368.5" y="193" width="1" height="5" fill="#999"/>
<rect x="1380.0" y="193" width="1" height="5" fill="#999"/>
<rect x="1391.6" y="193" width="1" height="5" fill="#999"/>
<rect x="1403.1" y="193" width="1" height="5" fill="#999"/>
<rect x="1414.7" y="193" width="1" height="5" fill="#999"/>
<rect x="1426.0" y="177" width="1.4" height="22" fill="#a0a0a0"/>
<rect x="1437.7" y="193" width="1" height="5" fill="#999"/>
<rect x="1449.3" y="193" width="1" height="5" fill="#999"/>
<rect x="1460.8" y="193" width="1" height="5" fill="#999"/>
<rect x="1472.3" y="193" width="1" height="5" fill="#999"/>
<rect x="1483.9" y="193" width="1" height="5" fill="#999"/>
<rect x="1495.2" y="177" width="1.4" height="22" fill="#a0a0a0"/>
<rect x="1507.0" y="193" width="1" height="5" fill="#999"/>
<rect x="1518.5" y="193" width="1" height="5" fill="#999"/>
<rect x="1530.0" y="193" width="1" height="5" fill="#999"/>
<rect x="1541.6" y="193" width="1" height="5" fill="#999"/>
<rect x="1553.1" y="193" width="1" height="5" fill="#999"/>
<rect x="1564.5" y="177" width="1.4" height="22" fill="#a0a0a0"/>
<rect x="1576.2" y="193" width="1" height="5" fill="#999"/>
<rect x="1587.7" y="193" width="1" height="5" fill="#999"/>
<rect x="1599.3" y="193" width="1" height="5" fill="#999"/>
<rect x="1610.8" y="193" width="1" height="5" fill="#999"/>
<rect x="1622.3" y="193" width="1" height="5" fill="#999"/>
<rect x="1633.7" y="177" width="1.4" height="22" fill="#a0a0a0"/>
<rect x="1645.4" y="193" width="1" height="5" fill="#999"/>
<rect x="1657.0" y="193" width="1" height="5" fill="#999"/>
<text x="529.8" y="190.8" font-size="15" fill="#333">0</text>
<text x="599.0" y="190.8" font-size="15" fill="#333">50</text>
<text x="668.3" y="190.8" font-size="15" fill="#333">100</text>
<text x="737.5" y="190.8" font-size="15" fill="#333">150</text>
<text x="806.7" y="190.8" font-size="15" fill="#333">200</text>
<text x="876.0" y="190.8" font-size="15" fill="#333">250</text>
<text x="945.2" y="190.8" font-size="15" fill="#333">300</text>
<text x="1014.4" y="190.8" font-size="15" fill="#333">350</text>
<text x="1083.6" y="190.8" font-size="15" fill="#333">400</text>
<text x="1152.9" y="190.8" font-size="15" fill="#333">450</text>
<text x="1222.1" y="190.8" font-size="15" fill="#333">500</text>
<text x="1291.3" y="190.8" font-size="15" fill="#333">550</text>
<text x="1360.6" y="190.8" font-size="15" fill="#333">600</text>
<text x="1429.8" y="190.8" font-size="15" fill="#333">650</text>
<text x="1499.0" y="190.8" font-size="15" fill="#333">700</text>
<text x="1568.2" y="190.8" font-size="15" fill="#333">750</text>
<text x="1637.5" y="190.8" font-size="15" fill="#333">800</text>
</svg>
<svg style="position:absolute;left:462px;top:199px" width="26" height="722" viewBox="462 199 26 722">
<rect x="463.5" y="199.5" width="23" height="730" fill="#fff" stroke="#a8a8a8"/>
<rect x="485.6" y="199" width="2" height="722" fill="#a0a0a0"/>
<rect x="480" y="211.4" width="5" height="1" fill="#999"/>
<rect x="480" y="222.7" width="5" height="1" fill="#999"/>
<rect x="480" y="234.1" width="5" height="1" fill="#999"/>
<rect x="480" y="245.4" width="5" height="1" fill="#999"/>
<rect x="480" y="256.8" width="5" height="1" fill="#999"/>
<rect x="464" y="269.0" width="22" height="1.4" fill="#a0a0a0"/>
<rect x="480" y="280.6" width="5" height="1" fill="#999"/>
<rect x="480" y="292.0" width="5" height="1" fill="#999"/>
<rect x="480" y="303.3" width="5" height="1" fill="#999"/>
<rect x="480" y="314.7" width="5" height="1" fill="#999"/>
<rect x="480" y="326.0" width="5" height="1" fill="#999"/>
<rect x="464" y="338.3" width="22" height="1.4" fill="#a0a0a0"/>
<rect x="480" y="349.8" width="5" height="1" fill="#999"/>
<rect x="480" y="361.2" width="5" height="1" fill="#999"/>
<rect x="480" y="372.5" width="5" height="1" fill="#999"/>
<rect x="480" y="383.9" width="5" height="1" fill="#999"/>
<rect x="480" y="395.3" width="5" height="1" fill="#999"/>
<rect x="464" y="407.5" width="22" height="1.4" fill="#a0a0a0"/>
<rect x="480" y="419.1" width="5" height="1" fill="#999"/>
<rect x="480" y="430.4" width="5" height="1" fill="#999"/>
<rect x="480" y="441.8" width="5" height="1" fill="#999"/>
<rect x="480" y="453.1" width="5" height="1" fill="#999"/>
<rect x="480" y="464.5" width="5" height="1" fill="#999"/>
<rect x="464" y="476.7" width="22" height="1.4" fill="#a0a0a0"/>
<rect x="480" y="488.3" width="5" height="1" fill="#999"/>
<rect x="480" y="499.6" width="5" height="1" fill="#999"/>
<rect x="480" y="511.0" width="5" height="1" fill="#999"/>
<rect x="480" y="522.4" width="5" height="1" fill="#999"/>
<rect x="480" y="533.7" width="5" height="1" fill="#999"/>
<rect x="464" y="546.0" width="22" height="1.4" fill="#a0a0a0"/>
<rect x="480" y="557.5" width="5" height="1" fill="#999"/>
<rect x="480" y="568.9" width="5" height="1" fill="#999"/>
<rect x="480" y="580.2" width="5" height="1" fill="#999"/>
<rect x="480" y="591.6" width="5" height="1" fill="#999"/>
<rect x="480" y="603.0" width="5" height="1" fill="#999"/>
<rect x="464" y="615.2" width="22" height="1.4" fill="#a0a0a0"/>
<rect x="480" y="626.7" width="5" height="1" fill="#999"/>
<rect x="480" y="638.1" width="5" height="1" fill="#999"/>
<rect x="480" y="649.5" width="5" height="1" fill="#999"/>
<rect x="480" y="660.8" width="5" height="1" fill="#999"/>
<rect x="480" y="672.2" width="5" height="1" fill="#999"/>
<rect x="464" y="684.4" width="22" height="1.4" fill="#a0a0a0"/>
<rect x="480" y="696.0" width="5" height="1" fill="#999"/>
<rect x="480" y="707.3" width="5" height="1" fill="#999"/>
<rect x="480" y="718.7" width="5" height="1" fill="#999"/>
<rect x="480" y="730.0" width="5" height="1" fill="#999"/>
<rect x="480" y="741.4" width="5" height="1" fill="#999"/>
<rect x="464" y="753.6" width="22" height="1.4" fill="#a0a0a0"/>
<rect x="480" y="765.2" width="5" height="1" fill="#999"/>
<rect x="480" y="776.6" width="5" height="1" fill="#999"/>
<rect x="480" y="787.9" width="5" height="1" fill="#999"/>
<rect x="480" y="799.3" width="5" height="1" fill="#999"/>
<rect x="480" y="810.6" width="5" height="1" fill="#999"/>
<rect x="464" y="822.9" width="22" height="1.4" fill="#a0a0a0"/>
<rect x="480" y="834.4" width="5" height="1" fill="#999"/>
<rect x="480" y="845.8" width="5" height="1" fill="#999"/>
<rect x="480" y="857.2" width="5" height="1" fill="#999"/>
<rect x="480" y="868.5" width="5" height="1" fill="#999"/>
<rect x="480" y="879.9" width="5" height="1" fill="#999"/>
<rect x="464" y="892.1" width="22" height="1.4" fill="#a0a0a0"/>
<rect x="480" y="903.7" width="5" height="1" fill="#999"/>
<rect x="480" y="915.0" width="5" height="1" fill="#999"/>
<text transform="translate(467.6,203.6) rotate(90)" font-size="15" fill="#333">0</text>
<text transform="translate(467.6,272.8) rotate(90)" font-size="15" fill="#333">50</text>
<text transform="translate(467.6,342.1) rotate(90)" font-size="15" fill="#333">100</text>
<text transform="translate(467.6,411.3) rotate(90)" font-size="15" fill="#333">150</text>
<text transform="translate(467.6,480.5) rotate(90)" font-size="15" fill="#333">200</text>
<text transform="translate(467.6,549.8) rotate(90)" font-size="15" fill="#333">250</text>
<text transform="translate(467.6,619.0) rotate(90)" font-size="15" fill="#333">300</text>
<text transform="translate(467.6,688.2) rotate(90)" font-size="15" fill="#333">350</text>
<text transform="translate(467.6,757.4) rotate(90)" font-size="15" fill="#333">400</text>
<text transform="translate(467.6,826.7) rotate(90)" font-size="15" fill="#333">450</text>
<text transform="translate(467.6,895.9) rotate(90)" font-size="15" fill="#333">500</text>
</svg>
<!-- ===== canvas ===== -->
<div class="t" style="left:464px;top:179px;font-size:15px;color:#333">dip</div>
<div class="abs" style="left:488px;top:200px;width:1176px;height:721px;background:#e3e3e3"></div>
<div class="abs" style="left:506px;top:200px;width:21px;height:721px;background:linear-gradient(90deg,#e3e3e3,#cfcfcf 70%,#9a9a9a)"></div>
<div class="abs" style="left:1625px;top:200px;width:16px;height:721px;background:linear-gradient(90deg,#9a9a9a,#cfcfcf 30%,#e3e3e3)"></div>
<div class="abs" style="left:527px;top:200px;width:1098px;height:721px;background:#fff"></div>
<svg style="left:0;top:0" width="1686" height="1000" viewBox="0 0 1686 1000">
<defs>
<clipPath id="cv"><rect x="488" y="200" width="1176" height="721"/></clipPath>
</defs>
<g clip-path="url(#cv)">
<rect x="560.6" y="200" width="1.3" height="721" fill="#e6e6e6"/>
<rect x="595.2" y="200" width="1.3" height="721" fill="#d3d3d3"/>
<rect x="629.8" y="200" width="1.3" height="721" fill="#e6e6e6"/>
<rect x="664.5" y="200" width="1.3" height="721" fill="#d3d3d3"/>
<rect x="699.1" y="200" width="1.3" height="721" fill="#e6e6e6"/>
<rect x="733.7" y="200" width="1.3" height="721" fill="#d3d3d3"/>
<rect x="768.3" y="200" width="1.3" height="721" fill="#e6e6e6"/>
<rect x="802.9" y="200" width="1.3" height="721" fill="#d3d3d3"/>
<rect x="837.5" y="200" width="1.3" height="721" fill="#e6e6e6"/>
<rect x="872.2" y="200" width="1.3" height="721" fill="#d3d3d3"/>
<rect x="906.8" y="200" width="1.3" height="721" fill="#e6e6e6"/>
<rect x="941.4" y="200" width="1.3" height="721" fill="#d3d3d3"/>
<rect x="976.0" y="200" width="1.3" height="721" fill="#e6e6e6"/>
<rect x="1010.6" y="200" width="1.3" height="721" fill="#d3d3d3"/>
<rect x="1045.2" y="200" width="1.3" height="721" fill="#e6e6e6"/>
<rect x="1079.8" y="200" width="1.3" height="721" fill="#d3d3d3"/>
<rect x="1114.5" y="200" width="1.3" height="721" fill="#e6e6e6"/>
<rect x="1149.1" y="200" width="1.3" height="721" fill="#d3d3d3"/>
<rect x="1183.7" y="200" width="1.3" height="721" fill="#e6e6e6"/>
<rect x="1218.3" y="200" width="1.3" height="721" fill="#d3d3d3"/>
<rect x="1252.9" y="200" width="1.3" height="721" fill="#e6e6e6"/>
<rect x="1287.5" y="200" width="1.3" height="721" fill="#d3d3d3"/>
<rect x="1322.1" y="200" width="1.3" height="721" fill="#e6e6e6"/>
<rect x="1356.8" y="200" width="1.3" height="721" fill="#d3d3d3"/>
<rect x="1391.4" y="200" width="1.3" height="721" fill="#e6e6e6"/>
<rect x="1426.0" y="200" width="1.3" height="721" fill="#d3d3d3"/>
<rect x="1460.6" y="200" width="1.3" height="721" fill="#e6e6e6"/>
<rect x="1495.2" y="200" width="1.3" height="721" fill="#d3d3d3"/>
<rect x="1529.8" y="200" width="1.3" height="721" fill="#e6e6e6"/>
<rect x="1564.5" y="200" width="1.3" height="721" fill="#d3d3d3"/>
<rect x="1599.1" y="200" width="1.3" height="721" fill="#e6e6e6"/>
<rect x="526" y="234.2" width="1099" height="1.3" fill="#e8e8e8"/>
<rect x="526" y="268.8" width="1099" height="1.3" fill="#d6d6d6"/>
<rect x="526" y="303.4" width="1099" height="1.3" fill="#e8e8e8"/>
<rect x="526" y="338.1" width="1099" height="1.3" fill="#d6d6d6"/>
<rect x="526" y="372.7" width="1099" height="1.3" fill="#e8e8e8"/>
<rect x="526" y="407.3" width="1099" height="1.3" fill="#d6d6d6"/>
<rect x="526" y="441.9" width="1099" height="1.3" fill="#e8e8e8"/>
<rect x="526" y="476.5" width="1099" height="1.3" fill="#d6d6d6"/>
<rect x="526" y="511.1" width="1099" height="1.3" fill="#e8e8e8"/>
<rect x="526" y="545.8" width="1099" height="1.3" fill="#d6d6d6"/>
<rect x="526" y="580.4" width="1099" height="1.3" fill="#e8e8e8"/>
<rect x="526" y="615.0" width="1099" height="1.3" fill="#d6d6d6"/>
<rect x="526" y="649.6" width="1099" height="1.3" fill="#e8e8e8"/>
<rect x="526" y="684.2" width="1099" height="1.3" fill="#d6d6d6"/>
<rect x="526" y="718.8" width="1099" height="1.3" fill="#e8e8e8"/>
<rect x="526" y="753.4" width="1099" height="1.3" fill="#d6d6d6"/>
<rect x="526" y="788.1" width="1099" height="1.3" fill="#e8e8e8"/>
<rect x="526" y="822.7" width="1099" height="1.3" fill="#d6d6d6"/>
<rect x="526" y="857.3" width="1099" height="1.3" fill="#e8e8e8"/>
<rect x="526" y="891.9" width="1099" height="1.3" fill="#d6d6d6"/>
<defs>
<linearGradient id="g1a" x1="0" y1="0" x2="1" y2="0"><stop offset="0" stop-color="#8fd33c"/><stop offset="0.25" stop-color="#7ab833"/><stop offset="0.5" stop-color="#6a9c2a"/><stop offset="0.75" stop-color="#52801e"/><stop offset="1" stop-color="#446b16"/></linearGradient>
<linearGradient id="g1b" x1="0" y1="0" x2="0" y2="1"><stop offset="0" stop-color="#8fd33c"/><stop offset="0.25" stop-color="#7ab833"/><stop offset="0.5" stop-color="#6a9c2a"/><stop offset="0.75" stop-color="#52801e"/><stop offset="1" stop-color="#446b16"/></linearGradient>
<linearGradient id="g2" x1="0" y1="0" x2="1" y2="0"><stop offset="0" stop-color="#3a8496"/><stop offset="0.08" stop-color="#4290a4"/><stop offset="0.31" stop-color="#78bfd4"/><stop offset="0.6" stop-color="#4f8fa2"/><stop offset="1" stop-color="#265866"/></linearGradient>
<radialGradient id="g3" cx="0.5" cy="0.5" r="0.5"><stop offset="0" stop-color="#ee1c24"/><stop offset="0.6" stop-color="#d4151c"/><stop offset="1" stop-color="#b50f14"/></radialGradient>
<pattern id="chk" x="1478.75" y="249.5" width="11.06" height="11.06" patternUnits="userSpaceOnUse"><rect width="11.06" height="11.06" fill="#7030a0"/><rect x="0" y="0" width="5.53" height="5.53" fill="#92d050"/><rect x="5.53" y="5.53" width="5.53" height="5.53" fill="#92d050"/></pattern>
<linearGradient id="g5" x1="0.1" y1="0.15" x2="0.85" y2="0.9"><stop offset="0" stop-color="#f4bc00"/><stop offset="0.2" stop-color="#e39a0c"/><stop offset="0.45" stop-color="#b08432"/><stop offset="0.62" stop-color="#7f6a72"/><stop offset="0.8" stop-color="#3f7aa8"/><stop offset="1" stop-color="#2a86c0"/></linearGradient>
<linearGradient id="g5r" x1="0.9" y1="0.1" x2="0.1" y2="0.9"><stop offset="0" stop-color="#a03838" stop-opacity="0.75"/><stop offset="0.3" stop-color="#a03838" stop-opacity="0"/><stop offset="0.7" stop-color="#a03838" stop-opacity="0"/><stop offset="1" stop-color="#a03838" stop-opacity="0.8"/></linearGradient>
<linearGradient id="g6a" x1="0" y1="0" x2="1" y2="0"><stop offset="0" stop-color="#74f67a"/><stop offset="0.12" stop-color="#74f67a"/><stop offset="0.3" stop-color="#70e6a0"/><stop offset="0.55" stop-color="#70cfd0"/><stop offset="0.85" stop-color="#76b8fa"/><stop offset="1" stop-color="#7cbcff"/></linearGradient>
<linearGradient id="g6tl" gradientUnits="userSpaceOnUse" x1="934.0" y1="552.7" x2="904.2" y2="512.6"><stop offset="0" stop-color="#ffffff" stop-opacity="0"/><stop offset="0.25" stop-color="#ffffff" stop-opacity="0.16"/><stop offset="0.55" stop-color="#ffffff" stop-opacity="0.6"/><stop offset="0.8" stop-color="#ffffff" stop-opacity="0.92"/><stop offset="1" stop-color="#ffffff" stop-opacity="1"/></linearGradient>
<linearGradient id="g6bl" gradientUnits="userSpaceOnUse" x1="934.0" y1="610.7" x2="904.2" y2="650.8"><stop offset="0" stop-color="#ffffff" stop-opacity="0"/><stop offset="0.25" stop-color="#ffffff" stop-opacity="0.16"/><stop offset="0.55" stop-color="#ffffff" stop-opacity="0.6"/><stop offset="0.8" stop-color="#ffffff" stop-opacity="0.92"/><stop offset="1" stop-color="#ffffff" stop-opacity="1"/></linearGradient>
<linearGradient id="g6tr" gradientUnits="userSpaceOnUse" x1="1012.0" y1="552.7" x2="1041.8" y2="512.6"><stop offset="0" stop-color="#ffffff" stop-opacity="0"/><stop offset="0.25" stop-color="#ffffff" stop-opacity="0.16"/><stop offset="0.55" stop-color="#ffffff" stop-opacity="0.6"/><stop offset="0.8" stop-color="#ffffff" stop-opacity="0.92"/><stop offset="1" stop-color="#ffffff" stop-opacity="1"/></linearGradient>
<linearGradient id="g6br" gradientUnits="userSpaceOnUse" x1="1012.0" y1="610.7" x2="1041.8" y2="650.8"><stop offset="0" stop-color="#ffffff" stop-opacity="0"/><stop offset="0.25" stop-color="#ffffff" stop-opacity="0.16"/><stop offset="0.55" stop-color="#ffffff" stop-opacity="0.6"/><stop offset="0.8" stop-color="#ffffff" stop-opacity="0.92"/><stop offset="1" stop-color="#ffffff" stop-opacity="1"/></linearGradient>
<clipPath id="frmc"><path clip-rule="evenodd" d="M595.4 739.9 H803.8 V895.3 H595.4 Z M650.1 792.9 V841.1 H749.4 V792.9 Z"/></clipPath>
<mask id="octm" maskUnits="userSpaceOnUse" x="880" y="490" width="186" height="184">
<path d="M885 494 H973 V581.7 H885 Z" fill="url(#g6tl)"/>
<path d="M885 669 H973 V581.7 H885 Z" fill="url(#g6bl)"/>
<path d="M1061 494 H973 V581.7 H1061 Z" fill="url(#g6tr)"/>
<path d="M1061 669 H973 V581.7 H1061 Z" fill="url(#g6br)"/>
</mask>
<linearGradient id="g6ov" gradientUnits="userSpaceOnUse" x1="885.9" y1="0" x2="1060.2" y2="0"><stop offset="0" stop-color="#36b0c6"/><stop offset="0.3" stop-color="#36aece"/><stop offset="0.55" stop-color="#36a2e2"/><stop offset="0.8" stop-color="#3394f6"/><stop offset="1" stop-color="#3394f6"/></linearGradient>
<clipPath id="octc"><path d="M938.1 494.9 H1010.6 L1060.2 545.3 V617.4 L1010.6 668.5 H938.1 L885.9 617.4 V545.3 Z"/></clipPath>
<linearGradient id="g7f" x1="0" y1="0" x2="1" y2="1"><stop offset="0" stop-color="#858585"/><stop offset="0.5" stop-color="#6b6b6b"/><stop offset="1" stop-color="#5c5c5c"/></linearGradient>
<linearGradient id="g7s" x1="0" y1="0" x2="1" y2="0"><stop offset="0" stop-color="#0c0c0c"/><stop offset="1" stop-color="#505050"/></linearGradient>
<linearGradient id="g7b" x1="0" y1="0" x2="0" y2="1"><stop offset="0" stop-color="#080808"/><stop offset="1" stop-color="#5a5a5a"/></linearGradient>
<linearGradient id="g8" x1="0" y1="0" x2="0" y2="1"><stop offset="0" stop-color="#0070c0"/><stop offset="0.12" stop-color="#0074c4"/><stop offset="0.5" stop-color="#00a2e4"/><stop offset="0.88" stop-color="#0074c4"/><stop offset="1" stop-color="#0070c0"/></linearGradient>
<linearGradient id="g9t" gradientUnits="userSpaceOnUse" x1="0" y1="739.9" x2="0" y2="817.5999999999999"><stop offset="0" stop-color="#07a040"/><stop offset="0.67" stop-color="#66ca3e"/><stop offset="1" stop-color="#66ca3e"/></linearGradient>
<linearGradient id="g9b" gradientUnits="userSpaceOnUse" x1="0" y1="895.3" x2="0" y2="817.5999999999999"><stop offset="0" stop-color="#07a040"/><stop offset="0.67" stop-color="#66ca3e"/><stop offset="1" stop-color="#66ca3e"/></linearGradient>
<linearGradient id="g9l" gradientUnits="userSpaceOnUse" x1="595.4" y1="0" x2="699.5999999999999" y2="0"><stop offset="0" stop-color="#07a040"/><stop offset="0.67" stop-color="#66ca3e"/><stop offset="1" stop-color="#66ca3e"/></linearGradient>
<linearGradient id="g9r" gradientUnits="userSpaceOnUse" x1="803.8" y1="0" x2="699.5999999999999" y2="0"><stop offset="0" stop-color="#07a040"/><stop offset="0.67" stop-color="#66ca3e"/><stop offset="1" stop-color="#66ca3e"/></linearGradient>
<filter id="gblur" x="-60%" y="-80%" width="220%" height="260%"><feGaussianBlur stdDeviation="15"/></filter>
<linearGradient id="g10" x1="0" y1="0" x2="1" y2="0"><stop offset="0" stop-color="#e81c12"/><stop offset="0.12" stop-color="#ee4214"/><stop offset="0.3" stop-color="#f67c14"/><stop offset="0.5" stop-color="#ffb410"/><stop offset="0.7" stop-color="#f67c14"/><stop offset="0.88" stop-color="#ee4214"/><stop offset="1" stop-color="#e81c12"/></linearGradient>
<linearGradient id="g10t" x1="0.1" y1="0" x2="0.9" y2="1"><stop offset="0" stop-color="#ffaa10"/><stop offset="0.5" stop-color="#f87a12"/><stop offset="1" stop-color="#ee3a14"/></linearGradient>
<pattern id="hat" width="5.87" height="5.87" patternUnits="userSpaceOnUse" patternTransform="rotate(-45)"><rect width="5.87" height="5.87" fill="#b9afa7"/><rect y="0" width="5.87" height="0.75" fill="#5c554f"/></pattern>
<linearGradient id="sky" x1="0" y1="0" x2="0" y2="1"><stop offset="0" stop-color="#cfd0e2"/><stop offset="0.2" stop-color="#dcdde9"/><stop offset="0.5" stop-color="#e6e7ef"/><stop offset="1" stop-color="#eceef4"/></linearGradient>
<linearGradient id="sea" x1="0" y1="0" x2="0" y2="1"><stop offset="0" stop-color="#3f5478"/><stop offset="0.2" stop-color="#4d6286"/><stop offset="0.3" stop-color="#6f7f9c"/><stop offset="0.42" stop-color="#a9b3c6"/><stop offset="0.55" stop-color="#dcdfe4"/><stop offset="1" stop-color="#e6e6e6"/></linearGradient>
<clipPath id="arw"><path d="M1385.2 748.6 H1476 C1497 748.6 1509 754 1525.4 774.2 L1584.7 851 L1600.9 838.6 L1581 880.6 L1535.6 889.9 L1551.3 876 L1490.3 796.4 C1485 790.5 1481 789.9 1473 789.9 H1385.2 Z"/></clipPath>
</defs>

<g id="allshapes">
<g id="sh1">
<!-- 1 green rect -->
<rect x="595.4" y="245.3" width="207.6" height="152" fill="url(#g1a)"/>
<path d="M595.4 245.3 V397.3 H803 Z" fill="url(#g1b)"/>
</g>
<g id="sh2">
<!-- 2 teal rect -->
<rect x="896.9" y="245.3" width="152.4" height="152" fill="url(#g2)"/>
</g>
<g id="sh3">
<!-- 3 red circle -->
<circle cx="1223.8" cy="321.5" r="76" fill="url(#g3)"/>
</g>
<g id="sh4">
<!-- 4 triangle -->
<path d="M1481.9 243 L1569.2 396.6 L1392.5 396.6 Z" fill="url(#chk)" stroke="#7030a0" stroke-width="1.2" vector-effect="non-scaling-stroke"/>
</g>
<g id="sh5">
<!-- 5 star -->
<path id="star" d="M699.8 480.2 L725.9 518.1 L774.5 515.9 L762.3 564.1 L792.8 596.1 L749.5 616.3 L741.7 661.2 L699.8 640.2 L658.6 661.2 L650.9 616.3 L606 596.1 L637.6 564.1 L624.8 515.9 L673.3 518.1 Z" fill="url(#g5)"/>
<path d="M699.8 480.2 L725.9 518.1 L774.5 515.9 L762.3 564.1 L792.8 596.1 L749.5 616.3 L741.7 661.2 L699.8 640.2 L658.6 661.2 L650.9 616.3 L606 596.1 L637.6 564.1 L624.8 515.9 L673.3 518.1 Z" fill="url(#g5r)" stroke="#c0392b" stroke-width="1.1" vector-effect="non-scaling-stroke"/>
</g>
<g id="sh6">
<!-- 6 octagon -->
<g clip-path="url(#octc)">
<rect x="885" y="494" width="176" height="175" fill="url(#g6a)"/>
<rect x="885" y="494" width="176" height="175" fill="url(#g6ov)" mask="url(#octm)"/>
</g>
<path d="M938.1 494.9 H1010.6 L1060.2 545.3 V617.4 L1010.6 668.5 H938.1 L885.9 617.4 V545.3 Z" fill="none" stroke="#3f87cf" stroke-width="1" vector-effect="non-scaling-stroke"/>
</g>
<g id="sh7">
<!-- 7 3D box -->
<path d="M1120.6 624.3 H1294.6 L1328 667.8 H1153.7 Z" fill="url(#g7b)"/>
<path d="M1294.6 495.2 L1328 537 V667.8 L1294.6 624.3 Z" fill="url(#g7s)"/>
<rect x="1120.6" y="495.2" width="174" height="129.1" fill="url(#g7f)"/>
<path d="M1120.6 624.3 H1294.6 V495.2 M1294.6 624.3 L1328 667.8" fill="none" stroke="#e8e8e8" stroke-width="0.9" stroke-dasharray="3 1.6" vector-effect="non-scaling-stroke"/>
<path d="M1120.6 495.2 H1294.6 L1328 537 V667.8 H1153.7 L1120.6 624.3 Z" fill="none" stroke="#9a9a9a" stroke-width="0.7" stroke-dasharray="3 1.6" vector-effect="non-scaling-stroke"/>
</g>
<g id="sh8">
<!-- 8 chevron -->
<path d="M1417.2 494.9 H1481.9 L1546.2 581.5 L1484.4 668.5 H1416.1 L1481.9 581.5 Z" fill="url(#g8)" stroke="#0a5ea8" stroke-width="0.9" stroke-dasharray="3 1.6" vector-effect="non-scaling-stroke"/>
</g>
<g id="sh9">
<!-- 9 green frame -->
<g clip-path="url(#frmc)" shape-rendering="crispEdges">
<path d="M595.4 739.9 H803.8 L699.5999999999999 817.5999999999999 Z" fill="url(#g9t)"/>
<path d="M595.4 895.3 H803.8 L699.5999999999999 817.5999999999999 Z" fill="url(#g9b)"/>
<path d="M595.4 739.9 V895.3 L699.5999999999999 817.5999999999999 Z" fill="url(#g9l)"/>
<path d="M803.8 739.9 V895.3 L699.5999999999999 817.5999999999999 Z" fill="url(#g9r)"/>
</g>
<rect x="595.4" y="739.9" width="208.4" height="155.4" fill="none" stroke="#8fd648" stroke-width="1" vector-effect="non-scaling-stroke"/>
</g>
<g id="sh10">
<!-- 10 cylinder -->
<path d="M871.9 754.8 V877.3 A102.05 15.3 0 0 0 1076 877.3 V754.8 Z" fill="url(#g10)" stroke="#c8201a" stroke-width="1" vector-effect="non-scaling-stroke"/>
<ellipse cx="973.95" cy="754.8" rx="102.05" ry="15.3" fill="url(#g10t)" stroke="#c8201a" stroke-width="1" vector-effect="non-scaling-stroke"/>
</g>
<g id="sh11">
<!-- 11 hatch arrow -->
<path d="M1125.6 744.3 H1323 V833.1 H1249.3 V867.3 H1273.4 L1224.5 892.8 L1174.2 867.3 H1199.7 V833.1 H1125.6 Z" fill="url(#hat)" stroke="#3c3c3c" stroke-width="1.1" vector-effect="non-scaling-stroke"/>
</g>
<g id="sh12">
<!-- 12 photo arrow -->
<g clip-path="url(#arw)">
<rect x="1380" y="745" width="230" height="150" fill="url(#sky)"/>
<ellipse cx="1440" cy="764" rx="34" ry="7" fill="#c2c6da" opacity="0.8"/>
<ellipse cx="1420" cy="755" rx="30" ry="4" fill="#e6e6ee" opacity="0.8"/>
<ellipse cx="1470" cy="758" rx="26" ry="4" fill="#e9e9f0" opacity="0.8"/>
<ellipse cx="1400" cy="776" rx="16" ry="5" fill="#c6cadc" opacity="0.7"/>
<rect x="1500" y="790" width="110" height="27" fill="#dfe5f0"/>
<ellipse cx="1535" cy="803" rx="18" ry="5" fill="#c9d6ea"/>
<rect x="1500" y="816.6" width="110" height="80" fill="url(#sea)"/>
<path d="M1394 789 C1398 783 1408 781 1420 780 C1432 777 1444 778 1456 776 C1468 775 1480 775 1490 772 C1500 769 1512 768 1522 770 L1536 789 C1530 790 1526 794 1522 797 C1518 799 1516 803 1513 806 C1511 809 1508 812 1506 815 L1492 797 L1484 790 Z" fill="#86693f"/>
<path d="M1420 781 C1432 778 1444 779 1456 777 C1468 776 1480 776 1490 773 C1500 770 1512 769 1522 771 L1526 776 C1512 775 1498 778 1486 780 C1466 783 1440 783 1420 785 Z" fill="#a68b5c"/>
<path d="M1492 784 C1502 781 1518 780 1530 782 L1536 789 C1530 790 1526 794 1522 797 C1518 799 1516 803 1513 806 C1511 809 1509 811 1507 813 C1506 804 1502 794 1492 790 Z" fill="#3b3a38"/>
<path d="M1492 790 C1498 791 1504 797 1508 806 L1506 815 L1492 797 Z" fill="#6d5a3a"/>
<path d="M1581 851 L1600 839 L1592 858 C1588 855 1584 856 1580 853 Z" fill="#7a6444"/>
<path d="M1582 851 L1586 848 L1592 857 L1588 858 Z" fill="#2c2a28"/>
<path d="M1574 868 L1584 867 L1582 871 Z" fill="#4a4238"/>
</g>
<path d="M1385.2 748.6 H1476 C1497 748.6 1509 754 1525.4 774.2 L1584.7 851 L1600.9 838.6 L1581 880.6 L1535.6 889.9 L1551.3 876 L1490.3 796.4 C1485 790.5 1481 789.9 1473 789.9 H1385.2 Z" fill="none" stroke="#5b8cc4" stroke-width="1.1" vector-effect="non-scaling-stroke"/>
</g>
</g>
<!-- selection -->
<rect x="1384.8" y="727.8" width="111" height="83" fill="none" stroke="#1a9a1a" stroke-width="1.3" stroke-dasharray="4 2.5"/>
<g fill="#00e61a" stroke="#111" stroke-width="1.1">
<rect x="1379.3" y="722.3" width="11" height="11"/><rect x="1434.7" y="722.3" width="11" height="11"/><rect x="1490.3" y="722.3" width="11" height="11"/>
<rect x="1379.3" y="763.6" width="11" height="11"/><rect x="1490.3" y="763.6" width="11" height="11"/>
<rect x="1379.3" y="805.3" width="11" height="11"/><rect x="1434.7" y="805.3" width="11" height="11"/><rect x="1490.3" y="805.3" width="11" height="11"/>
<circle cx="1440.2" cy="686.5" r="5.4"/>
</g>
<g fill="#fff200" stroke="#333" stroke-width="0.9">
<path d="M1482.6 763.9 L1487.8 769.1 L1482.6 774.3 L1477.4 769.1 Z"/>
<path d="M1581.4 875 L1586.6 880.2 L1581.4 885.4 L1576.2 880.2 Z"/>
</g>
</g>
</svg>
<!-- thumbnails -->
<svg style="left:0;top:0" width="460" height="960" viewBox="0 0 460 960">
<defs><pattern id="chk2" width="2.8" height="2.8" patternUnits="userSpaceOnUse"><rect width="2.8" height="2.8" fill="#7a5e88"/><rect width="1.4" height="1.4" fill="#8ec04c"/><rect x="1.4" y="1.4" width="1.4" height="1.4" fill="#8ec04c"/></pattern></defs>
<use href="#sh1" transform="translate(-102.49 188.01) scale(0.2119 0.2164)"/>
<use href="#sh2" transform="translate(-137.51 164.33) scale(0.2907 0.2901)"/>
<use href="#sh3" transform="translate(-109.26 164.43) scale(0.2895 0.2895)"/>
<path d="M344.8 239.7 L365.2 275.4 L324.0 275.4 Z" fill="url(#chk2)" stroke="#7030a0" stroke-width="1.3"/>
<use href="#sh5" transform="translate(-110.36 193.63) scale(0.2227 0.2265)"/>
<use href="#sh6" transform="translate(-86.84 184.36) scale(0.2387 0.2379)"/>
<use href="#sh7" transform="translate(-3.85 205.36) scale(0.2040 0.2016)"/>
<use href="#sh8" transform="translate(-25.84 184.36) scale(0.2506 0.2379)"/>
<use href="#sh9" transform="translate(-98.29 219.24) scale(0.2049 0.2059)"/>
<use href="#sh10" transform="translate(-66.05 215.29) scale(0.2171 0.2110)"/>
<path d="M224.7 371.3 L265.7 371.3 L265.7 391.2 L250.4 391.2 L250.4 398.8 L255.4 398.8 L245.2 404.5 L234.8 398.8 L240.1 398.8 L240.1 391.2 L224.7 391.2 Z" fill="url(#hat)" stroke="#3c3c3c" stroke-width="1.1"/>
<use href="#sh12" transform="translate(51.07 230.96) scale(0.1970 0.1911)"/>
<use href="#sh1" transform="translate(104.22 739.30) scale(0.1155)"/>
<use href="#sh2" transform="translate(104.22 739.30) scale(0.1155)"/>
<use href="#sh3" transform="translate(104.22 739.30) scale(0.1155)"/>
<path d="M275.4 767.4 L285.5 785.1 L265.1 785.1 Z" fill="url(#chk)" stroke="#7030a0" stroke-width="1.4"/>
<use href="#sh5" transform="translate(104.22 739.30) scale(0.1155)"/>
<use href="#sh6" transform="translate(104.22 739.30) scale(0.1155)"/>
<use href="#sh7" transform="translate(104.22 739.30) scale(0.1155)"/>
<use href="#sh8" transform="translate(104.22 739.30) scale(0.1155)"/>
<use href="#sh9" transform="translate(104.22 739.30) scale(0.1155)"/>
<use href="#sh10" transform="translate(104.22 739.30) scale(0.1155)"/>
<path d="M234.2 825.3 L257.0 825.3 L257.0 835.5 L248.5 835.5 L248.5 839.5 L251.3 839.5 L245.7 842.4 L239.8 839.5 L242.8 839.5 L242.8 835.5 L234.2 835.5 Z" fill="url(#hat)" stroke="#3c3c3c" stroke-width="1.2"/>
<use href="#sh12" transform="translate(104.22 739.30) scale(0.1155)"/>
<rect x="159.9" y="762.4" width="137.1" height="83.2" fill="none" stroke="#fff" stroke-width="5.6"/>
<rect x="159.9" y="762.4" width="137.1" height="83.2" fill="none" stroke="#fb0000" stroke-width="4"/>
<rect x="157.8" y="760.2" width="5.6" height="5.6" fill="#fb0000" stroke="#fff" stroke-width="1"/>
<rect x="293.6" y="760.2" width="5.6" height="5.6" fill="#fb0000" stroke="#fff" stroke-width="1"/>
<rect x="157.8" y="842.2" width="5.6" height="5.6" fill="#fb0000" stroke="#fff" stroke-width="1"/>
<rect x="293.6" y="842.2" width="5.6" height="5.6" fill="#fb0000" stroke="#fff" stroke-width="1"/>
</svg>
<!-- ===== scrollbar / page tabs / status ===== -->
<div class="abs" style="left:1664px;top:176px;width:22px;height:745px;background:#f0f0f0"></div>
<div class="abs" style="left:1666px;top:234px;width:18px;height:304px;background:#cdcdcd"></div>
<div class="abs" style="left:458px;top:921px;width:1228px;height:36px;background:#f0f0f0"></div>
<div class="selbox" style="left:465px;top:924px;width:58px;height:29px;background:#f3f6fa;border-width:1.5px"></div>
<div class="t" style="left:469px;top:929px">Page-1</div>
<div class="t" style="left:538px;top:929px">All</div>
<div class="t" style="left:619px;top:929px">Add</div>
<div class="abs" style="left:0;top:957px;width:1686px;height:43px;background:#fcfcfc"></div>
<div class="t" style="left:14.2px;top:969px;letter-spacing:0.17px">PAGE 1 OF 1</div>
<div class="t" style="left:148.6px;top:969px;letter-spacing:0.1px">SHAPE WIDTH: 80.00 dip, HEIGHT: 60.00 dip, ANGLE: 0.00 deg</div>
<div class="t" style="left:1603px;top:969px">100%</div>
<div class="abs" style="left:117px;top:962px;width:1px;height:32px;background:#c9c9c9"></div>
<div class="abs" style="left:137px;top:962px;width:1px;height:32px;background:#c9c9c9"></div>
<svg style="left:0;top:0" width="1686" height="1000" viewBox="0 0 1686 1000">
<!-- scrollbar chevrons -->
<path d="M1669.6 213.6 L1675 208.4 L1680.4 213.6" fill="none" stroke="#555" stroke-width="2.4"/>
<path d="M1669.6 907.4 L1675 912.6 L1680.4 907.4" fill="none" stroke="#555" stroke-width="2.4"/>
<!-- page tabs -->
<path d="M560.6 941.2 H571 L565.8 935.6 Z" fill="#222"/>
<circle cx="599.2" cy="938.8" r="10.8" fill="#58aa8a"/>
<path d="M599.2 932 V945.6 M592.4 938.8 H606" stroke="#fff" stroke-width="2.6"/>
<!-- zoom controls -->
<circle cx="1301.7" cy="977.2" r="8.7" fill="#fff" stroke="#6e6e6e" stroke-width="1.3"/><path d="M1296.4 977.2 H1307" stroke="#3a78c0" stroke-width="1.5"/>
<rect x="1333.5" y="972.4" width="215" height="5.4" rx="1" fill="#dedede" stroke="#d0d0d0" stroke-width="0.8"/>
<path d="M1433.4 961.6 H1447.4 V981.4 L1440.4 987.4 L1433.4 981.4 Z" fill="#e4e4e4" stroke="#a8a8a8" stroke-width="1"/>
<path d="M1333.8 988.6 V995.4 M1440.4 988.6 V995.4 M1548.2 988.6 V995.4" stroke="#8a8a8a" stroke-width="1"/>
<circle cx="1578.6" cy="977.4" r="8.7" fill="#fff" stroke="#6e6e6e" stroke-width="1.3"/><path d="M1573.2 977.4 H1584 M1578.6 972 V982.8" stroke="#3a78c0" stroke-width="1.5"/>
<rect x="1654.8" y="967.4" width="21" height="20.6" fill="#fff" stroke="#555" stroke-width="1.3"/>
<path d="M1657 970 H1673.6 M1657 985.4 H1673.6 M1657.4 970 V985.4 M1673.2 970 V985.4" stroke="#666" stroke-width="0.9" stroke-dasharray="1.2 1.6" fill="none"/>
<path d="M1665.4 969.6 V974.6 M1663.8 973 L1665.4 974.8 L1667 973 M1665.4 986 V981 M1663.8 982.6 L1665.4 980.8 L1667 982.6 M1657.6 977.8 H1662.6 M1661 976.2 L1662.8 977.8 L1661 979.4 M1673.2 977.8 H1668.2 M1669.8 976.2 L1668 977.8 L1669.8 979.4" stroke="#555" stroke-width="0.9" fill="none"/>
</svg>
</body></html>
